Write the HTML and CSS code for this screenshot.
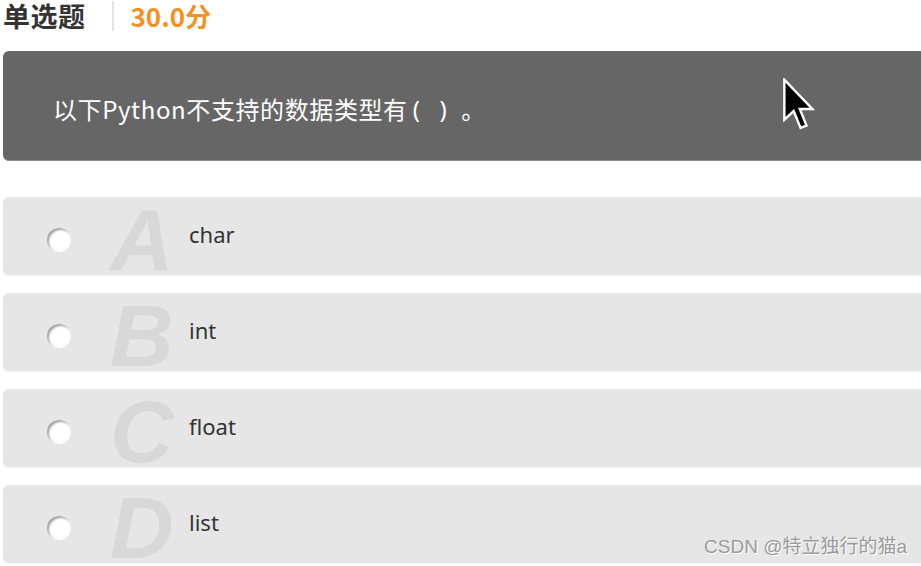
FILE: index.html
```html
<!DOCTYPE html>
<html lang="zh-CN">
<head>
<meta charset="utf-8">
<title>单选题</title>
<link rel="stylesheet" href="styles.css">
</head>
<body>
<div class="page">
  <div class="head">
    <span class="type">单选题</span>
    <span class="sep"></span>
    <span class="score">30.0分</span>
  </div>
  <div class="question">以下Python不支持的数据类型有<span class="paren">(</span><span class="paren gap">)</span><span class="dot">。</span></div>
  <ul class="options">
    <li class="option"><span class="radio"></span><span class="letter">A</span><span class="text">char</span></li>
    <li class="option"><span class="radio"></span><span class="letter">B</span><span class="text">int</span></li>
    <li class="option"><span class="radio"></span><span class="letter">C</span><span class="text">float</span></li>
    <li class="option"><span class="radio"></span><span class="letter">D</span><span class="text">list</span></li>
  </ul>
</div>
<svg class="cursor" viewBox="0 0 12 20" width="32" height="54" aria-hidden="true">
  <path d="M0.5 0.5 L0.5 15.5 L4 12.3 L6.6 18.6 L8.8 17.7 L6.3 11.5 L11 11.5 Z" fill="#000" stroke="#fff" stroke-width="0.9" stroke-linejoin="miter"/>
</svg>
<div class="watermark">CSDN @特立独行的猫a</div>
</body>
</html>
```

FILE: styles.css
```css
html, body {
  margin: 0;
  padding: 0;
  background: #fff;
  overflow: hidden;
}
body {
  width: 921px;
  height: 566px;
  position: relative;
  font-family: "Noto Sans", "Noto Sans CJK SC", sans-serif;
}
.page {
  padding-left: 3px;
}
.head {
  display: flex;
  align-items: center;
  height: 32px;
  line-height: 32px;
}
.type {
  font-size: 27px;
  font-weight: bold;
  color: #333;
  font-family: "Noto Sans CJK SC", sans-serif;
  letter-spacing: 0.5px;
}
.sep {
  width: 2px;
  height: 30px;
  background: #e3e3e3;
  margin: 0 17px 0 26px;
}
.score {
  font-size: 26px;
  font-weight: bold;
  color: #f5901f;
  font-family: "Noto Sans CJK SC", sans-serif;
}
.question {
  margin-top: 19px;
  width: 960px;
  height: 110px;
  box-sizing: border-box;
  background: #666;
  border-radius: 6px;
  border-bottom: 1px solid #8a8a8a;
  color: #fff;
  font-size: 24px;
  padding: 6px 0 0 50px;
  display: flex;
  align-items: center;
  font-family: "Noto Sans CJK SC", sans-serif;
  letter-spacing: 0.6px;
}
.paren {
  font-family: "Noto Sans", sans-serif;
  margin-left: 5px;
}
.paren.gap {
  margin-left: 19px;
}
.dot {
  margin-left: 14px;
}
.options {
  list-style: none;
  margin: 36px 0 0;
  padding: 0;
  display: flex;
  flex-direction: column;
  gap: 18px;
}
.option {
  width: 960px;
  height: 78px;
  background: #e6e6e6;
  border-radius: 6px;
  box-shadow: 0 1px 1px rgba(0,0,0,0.06);
  display: flex;
  align-items: center;
}
.radio {
  width: 24px;
  height: 24px;
  border-radius: 50%;
  background: #fff;
  box-shadow: inset 2px 2px 2px rgba(0,0,0,0.35);
  margin: 7px 0 0 44px;
  flex: none;
}
.letter {
  font-family: "Liberation Sans", Arial, sans-serif;
  font-weight: bold;
  font-style: italic;
  font-size: 88px;
  color: #d8d8d8;
  width: 82px;
  margin-left: 39px;
  line-height: 1;
  margin-top: 8px;
}
.text {
  font-size: 22px;
  color: #333;
  margin-left: -3px;
  margin-top: -4px;
}
.cursor {
  position: absolute;
  left: 783px;
  top: 78px;
}
.watermark {
  position: absolute;
  right: 14px;
  bottom: 8px;
  font-size: 19px;
  color: #9a9a9a;
  text-shadow: 1px 1px 0 #fff;
  font-family: "Liberation Sans", "Noto Sans CJK SC", sans-serif;
}
```
